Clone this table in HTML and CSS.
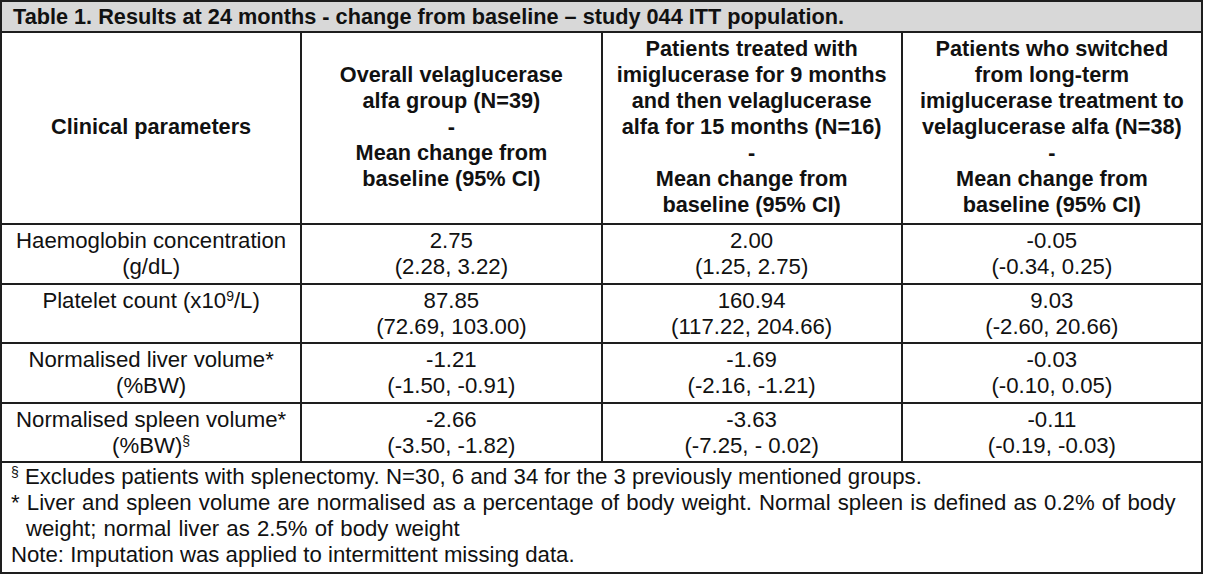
FILE: index.html
```html
<!DOCTYPE html>
<html>
<head>
<meta charset="utf-8">
<link rel="stylesheet" href="styles.css">
</head>
<body>
<table class="results">
  <colgroup><col><col><col><col></colgroup>
  <thead>
    <tr><th class="title" colspan="4">Table 1. Results at 24 months - change from baseline – study 044 ITT population.</th></tr>
    <tr class="head">
      <th>Clinical parameters</th>
      <th>Overall velaglucerase<br>alfa group (N=39)<br>-<br>Mean change from<br>baseline (95% CI)</th>
      <th>Patients treated with<br>imiglucerase for 9 months<br>and then velaglucerase<br>alfa for 15 months (N=16)<br>-<br>Mean change from<br>baseline (95% CI)</th>
      <th>Patients who switched<br>from long-term<br>imiglucerase treatment to<br>velaglucerase alfa (N=38)<br>-<br>Mean change from<br>baseline (95% CI)</th>
    </tr>
  </thead>
  <tbody>
    <tr>
      <td>Haemoglobin concentration<br>(g/dL)</td>
      <td>2.75<br>(2.28, 3.22)</td>
      <td>2.00<br>(1.25, 2.75)</td>
      <td>-0.05<br>(-0.34, 0.25)</td>
    </tr>
    <tr>
      <td>Platelet count (x10<sup>9</sup>/L)</td>
      <td>87.85<br>(72.69, 103.00)</td>
      <td>160.94<br>(117.22, 204.66)</td>
      <td>9.03<br>(-2.60, 20.66)</td>
    </tr>
    <tr>
      <td>Normalised liver volume*<br>(%BW)</td>
      <td>-1.21<br>(-1.50, -0.91)</td>
      <td>-1.69<br>(-2.16, -1.21)</td>
      <td>-0.03<br>(-0.10, 0.05)</td>
    </tr>
    <tr>
      <td>Normalised spleen volume*<br>(%BW)<sup>§</sup></td>
      <td>-2.66<br>(-3.50, -1.82)</td>
      <td>-3.63<br>(-7.25, - 0.02)</td>
      <td>-0.11<br>(-0.19, -0.03)</td>
    </tr>
  </tbody>
  <tfoot>
    <tr>
      <td colspan="4" class="notes">
        <p class="note"><sup>§</sup> Excludes patients with splenectomy. N=30, 6 and 34 for the 3 previously mentioned groups.</p>
        <p class="note hang">* Liver and spleen volume are normalised as a percentage of body weight. Normal spleen is defined as 0.2% of body weight; normal liver as 2.5% of body weight</p>
        <p class="note">Note: Imputation was applied to intermittent missing data.</p>
      </td>
    </tr>
  </tfoot>
</table>
</body>
</html>
```
FILE: styles.css
```css
html, body {
  margin: 0;
  padding: 0;
  background: #ffffff;
}
body {
  font-family: "Liberation Sans", Arial, sans-serif;
  font-size: 22.2px;
  line-height: 26px;
  color: #111111;
}
.results {
  width: 1203px;
  border-collapse: collapse;
  table-layout: fixed;
}
.results th,
.results td {
  border: 2px solid #1e1e1e;
  padding: 0;
  text-align: center;
}
.results th {
  font-size: 21.7px;
  font-weight: bold;
}
.results .title {
  background: #d8d8d8;
  text-align: left;
  padding: 2px 10px 1px 11px;
  height: 26px;
}
.results .head th {
  vertical-align: middle;
  padding: 3px 4px 5px;
}
.results tbody td {
  vertical-align: top;
  padding: 3px 4px 2.5px;
}
sup {
  font-size: 14px;
  line-height: 0;
  vertical-align: 7px;
}
.results .notes {
  text-align: left;
  padding: 1px 10px 4px 9px;
}
.note {
  margin: 0;
}
.hang {
  padding-left: 15px;
  text-indent: -15px;
  word-spacing: 1px;
}
```
